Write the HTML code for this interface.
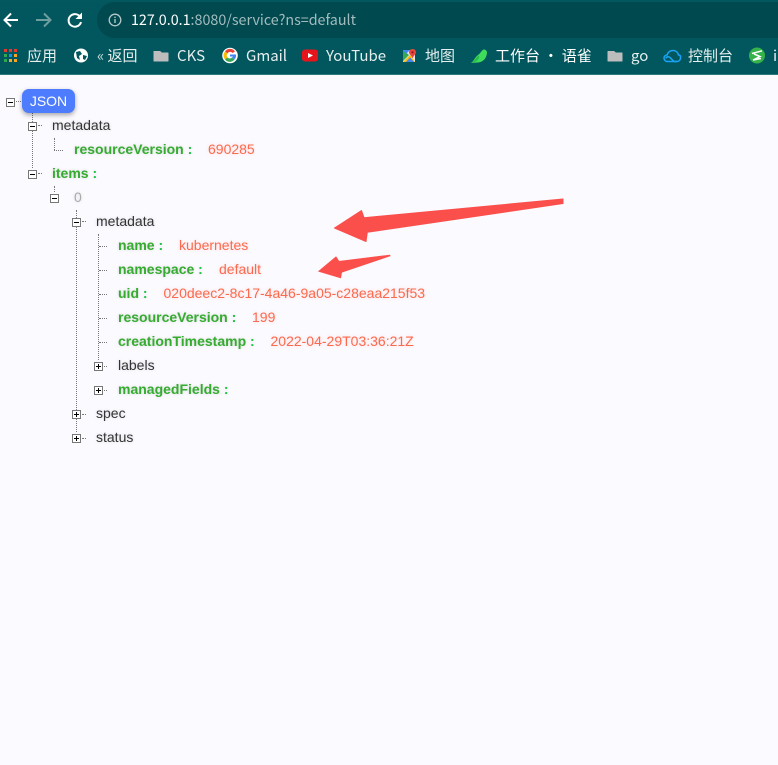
<!DOCTYPE html>
<html><head><meta charset="utf-8">
<style>
html,body{margin:0;padding:0;width:778px;height:765px;overflow:hidden;background:#fbfaff;}
.abs{position:absolute;white-space:nowrap;}
#bar{position:absolute;left:0;top:0;width:778px;height:75px;background:#01575d;}
#line{position:absolute;left:0;top:74px;width:778px;height:1px;background:#2d7c80;}
#top{position:absolute;left:0;top:0;width:778px;height:2px;background:#02585e;}
#addr{position:absolute;left:97px;top:2px;width:700px;height:36px;border-radius:18px;background:#00494f;}
.url{font:14.3px/18px "Noto Sans CJK SC","Liberation Sans",sans-serif;top:11px;color:#fff;}
.bm{font:15px/20px "Noto Sans CJK SC","Liberation Sans",sans-serif;color:#e6eeee;top:46px;}
.t{font:14px/24px "Liberation Sans",sans-serif;color:#333;text-shadow:0 0 3px rgba(0,0,0,.14);}
.k{font-weight:bold;color:#35ac2f;}
.c{color:#16c23d;font-weight:bold;}
.v{color:#fb6a4e;font-weight:normal;text-shadow:0 0 3px rgba(255,100,70,.22);}
.sw{position:absolute;width:7px;height:7px;border:1px solid #777;background:#fff;}
.sw i{position:absolute;left:1px;top:3px;width:5px;height:1px;background:#000;}
.sw b{position:absolute;left:3px;top:1px;width:1px;height:5px;background:#000;}
.h{position:absolute;height:0;border-top:1px dotted #777;}
.l{position:absolute;width:0;border-left:1px dotted #777;}
#json{position:absolute;left:22px;top:89px;width:53px;height:24px;border-radius:7px;background:#4d7cfe;color:#fff;font:14px/24px "Liberation Sans",sans-serif;text-align:center;box-shadow:0 2px 5px rgba(0,0,0,.35);}
</style></head><body>
<div id="bar"></div><div id="top"></div><div id="line"></div><div id="addr"></div>

<svg class="abs" style="left:0;top:0" width="100" height="40" viewBox="0 0 100 40" fill="none">
<path d="M18 20H5.5M11 13.5L4.500 20L11 26.500" stroke="#fff" stroke-width="2"/>
<path d="M36 20H49.500M44 13.500L50.500 20L44 26.500" stroke="#6f9ea1" stroke-width="2"/>
<path d="M80.500 17.500A6.300 6.300 0 1 0 81 22" stroke="#fff" stroke-width="2"/>
<path d="M82 12.500V19H75.500Z" fill="#fff"/>
</svg>
<svg class="abs" style="left:107px;top:13px" width="16" height="14" viewBox="0 0 16 14" fill="none">
<circle cx="8" cy="7" r="5.800" stroke="#b4c8c9" stroke-width="1.300"/>
<rect x="7.300" y="6" width="1.400" height="4" fill="#b4c8c9"/><rect x="7.300" y="3.600" width="1.400" height="1.400" fill="#b4c8c9"/>
</svg>
<div class="abs url" style="left:131px">127.0.0.1<span style="color:#a3bcbe">:8080/service?ns=default</span></div>

<!-- bookmark icons -->
<svg class="abs" style="left:0;top:46px" width="778" height="22" viewBox="0 0 778 22">
<g>
<rect x="4" y="3" width="3" height="3" fill="#e33b2e"/><rect x="9" y="3" width="3" height="3" fill="#e33b2e"/><rect x="14" y="3" width="3" height="3" fill="#e33b2e"/>
<rect x="4" y="8" width="3" height="3" fill="#2fa84f"/><rect x="9" y="8" width="3" height="3" fill="#1a8fe3"/><rect x="14" y="8" width="3" height="3" fill="#f5a623"/>
<rect x="4" y="13" width="3" height="3" fill="#2fa84f"/><rect x="9" y="13" width="3" height="3" fill="#f5a623"/><rect x="14" y="13" width="3" height="3" fill="#f5a623"/>
</g>
<circle cx="81" cy="9.500" r="7" fill="#fff"/>
<path d="M76 6L80 5L82 8L79 10L80 14L77 12ZM83 9L87 10L85 14L83 13Z" fill="#01575d"/>
<path d="M154 5.500H160L161.500 7H168V15H154Z" fill="#bdbdbd" stroke="#bdbdbd" stroke-linejoin="round"/>
<circle cx="230" cy="9.500" r="7.800" fill="#fff"/>
<path d="M235 5.500A6 6 0 0 0 225 5.500L227.500 7.500A3 3 0 0 1 232.500 7Z" fill="#ea4335"/>
<path d="M225 5.500A6 6 0 0 0 225 13.500L227.500 11.500A3 3 0 0 1 227.500 7.500Z" fill="#fbbc05"/>
<path d="M225 13.500A6 6 0 0 0 234.500 13.500L232 11.500A3 3 0 0 1 227.500 11.500Z" fill="#34a853"/>
<path d="M230 8.500H236V10.500A6 6 0 0 1 234.500 13.500L232 11.500L233 10.500H230Z" fill="#4285f4"/>
<rect x="302" y="3.500" width="16" height="12" rx="3" fill="#e8141c"/>
<path d="M308 7L313 9.500L308 12Z" fill="#fff"/>
<path d="M403 4H415V16H403Z" fill="#e8e8e8"/>
<path d="M403 16L410 9L415 16Z" fill="#fbbc05"/><path d="M403 4L409 9L403 15Z" fill="#34a853"/><path d="M403 4H410L406 8Z" fill="#4285f4"/><path d="M406 16L410 11.500L414 16Z" fill="#4285f4"/>
<path d="M412.500 3A3.300 3.300 0 0 1 416 6.300C416 8.500 413.500 9.500 412.500 12.500C411.500 9.500 409 8.500 409 6.300A3.300 3.300 0 0 1 412.500 3Z" fill="#e8453c"/>
<circle cx="412.500" cy="6.300" r="1.100" fill="#8b1a14"/>
<path d="M471 17C474 15 475 11 478 9C480 8 481 5 483.500 3.500C485.500 3.500 486.500 4.500 487 6C487 11 484 16 478 16.500Z" fill="#3fdc5c"/>
<path d="M471 17C475 15.500 476 11 479 9.500C480 13 476 16.500 471 17Z" fill="#25b84a"/>
<path d="M608 5.500H614L615.500 7H622V15H608Z" fill="#bdbdbd" stroke="#bdbdbd" stroke-linejoin="round"/>
<path d="M668 15.500C665 15.500 664 13.500 664 12C664 10 666 9 667 9C668 6 670 4.500 673 4.500C676 4.500 678 6.500 678.500 9C680.500 9 680.500 10 680.500 12C680.500 14 679 15.500 677 15.500H674L670 11.500C668.500 10 666 11 666 12.500" fill="none" stroke="#1aa3f5" stroke-width="1.500"/>
<path d="M668 15.500H677" stroke="#1aa3f5" stroke-width="1.500"/>
<circle cx="757" cy="9.500" r="8" fill="#35b24a"/>
<path d="M752 7.500L762 4.800M754 8L760 10.500L753 14M753 14L761 12.500" stroke="#fff" stroke-width="1.500" fill="none"/>
</svg>

<div class="abs bm" style="left:27px">应用</div>
<div class="abs bm" style="left:97px"><span style="color:#c9dadb">«</span> 返回</div>
<div class="abs bm" style="left:177px">CKS</div>
<div class="abs bm" style="left:246px">Gmail</div>
<div class="abs bm" style="left:326px">YouTube</div>
<div class="abs bm" style="left:425px">地图</div>
<div class="abs bm" style="left:495px;color:#fff">工作台 · 语雀</div>
<div class="abs bm" style="left:631px">go</div>
<div class="abs bm" style="left:688px">控制台</div>
<div class="abs bm" style="left:773px">i</div>

<!-- tree connector lines -->
<div class="h" style="left:16px;top:101px;width:5px"></div>
<div class="l" style="left:32px;top:113px;height:55px"></div>
<div class="h" style="left:38px;top:125px;width:4px"></div>
<div class="l" style="left:54px;top:138px;height:12px"></div>
<div class="h" style="left:54px;top:150px;width:9px"></div>
<div class="h" style="left:38px;top:173px;width:4px"></div>
<div class="l" style="left:54px;top:186px;height:6px"></div>
<div class="l" style="left:76px;top:210px;height:222px"></div>
<div class="h" style="left:82px;top:221px;width:4px"></div>
<div class="l" style="left:98px;top:234px;height:126px"></div>
<div class="h" style="left:99px;top:246px;width:8px"></div>
<div class="h" style="left:99px;top:270px;width:8px"></div>
<div class="h" style="left:99px;top:294px;width:8px"></div>
<div class="h" style="left:99px;top:318px;width:8px"></div>
<div class="h" style="left:99px;top:342px;width:8px"></div>
<div class="h" style="left:104px;top:366px;width:3px"></div>
<div class="h" style="left:104px;top:390px;width:3px"></div>
<div class="h" style="left:82px;top:414px;width:4px"></div>
<div class="h" style="left:82px;top:438px;width:4px"></div>

<!-- switches -->
<div class="sw" style="left:6px;top:98px"><i></i></div>
<div class="sw" style="left:28px;top:122px"><i></i></div>
<div class="sw" style="left:28px;top:170px"><i></i></div>
<div class="sw" style="left:50px;top:194px"><i></i></div>
<div class="sw" style="left:72px;top:218px"><i></i></div>
<div class="sw" style="left:94px;top:362px"><i></i><b></b></div>
<div class="sw" style="left:94px;top:386px"><i></i><b></b></div>
<div class="sw" style="left:72px;top:410px"><i></i><b></b></div>
<div class="sw" style="left:72px;top:434px"><i></i><b></b></div>

<div id="json">JSON</div>

<div class="abs t" style="left:52px;top:113px">metadata</div>
<div class="abs t k" style="left:74px;top:137px">resourceVersion <span class="c">:</span></div><div class="abs t v" style="left:208px;top:137px">690285</div>
<div class="abs t k" style="left:52px;top:161px">items <span class="c">:</span></div>
<div class="abs t" style="left:74px;top:185px;color:#aaa">0</div>
<div class="abs t" style="left:96px;top:209px">metadata</div>
<div class="abs t k" style="left:118px;top:233px">name <span class="c">:</span></div><div class="abs t v" style="left:179px;top:233px">kubernetes</div>
<div class="abs t k" style="left:118px;top:257px">namespace <span class="c">:</span></div><div class="abs t v" style="left:219px;top:257px">default</div>
<div class="abs t k" style="left:118px;top:281px">uid <span class="c">:</span></div><div class="abs t v" style="left:163.500px;top:281px">020deec2-8c17-4a46-9a05-c28eaa215f53</div>
<div class="abs t k" style="left:118px;top:305px">resourceVersion <span class="c">:</span></div><div class="abs t v" style="left:252px;top:305px">199</div>
<div class="abs t k" style="left:118px;top:329px">creationTimestamp <span class="c">:</span></div><div class="abs t v" style="left:270.500px;top:329px">2022-04-29T03:36:21Z</div>
<div class="abs t" style="left:118px;top:353px">labels</div>
<div class="abs t k" style="left:118px;top:377px">managedFields <span class="c">:</span></div>
<div class="abs t" style="left:96px;top:401px">spec</div>
<div class="abs t" style="left:96px;top:425px">status</div>

<svg class="abs" style="left:0;top:0" width="778" height="765" viewBox="0 0 778 765">
<path d="M334.500 228L361.500 210.500L364 217.700L563 199L563 203.500L367.300 232.300L366 241.500Z" fill="#fb4f4c" stroke="#fb4f4c" stroke-linejoin="round"/>
<path d="M318.500 271.300L336 256.700L339 261.300L390 255L390 256L341.700 272.300L340.700 278Z" fill="#fb4f4c" stroke="#fb4f4c" stroke-width=".6" stroke-linejoin="round"/>
</svg>
</body></html>
